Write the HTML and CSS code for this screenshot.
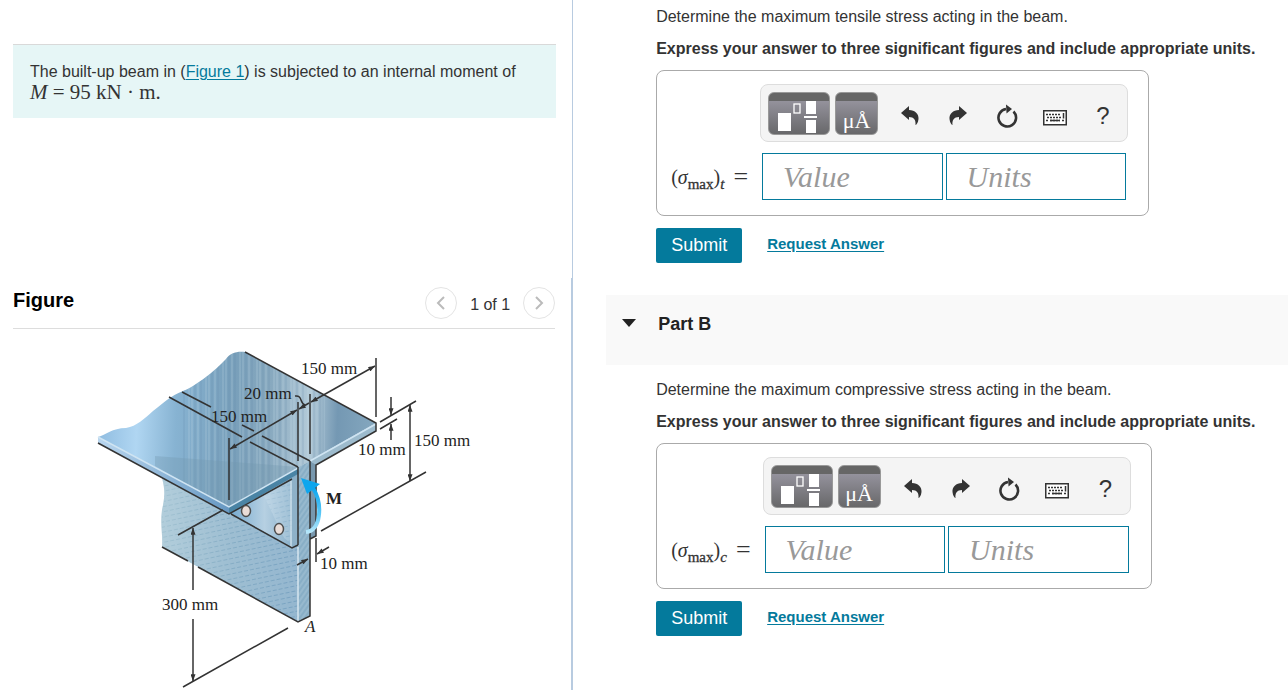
FILE: index.html
```
<!DOCTYPE html>
<html lang="en">

<head>
    <meta charset="UTF-8">
    <meta name="viewport" content="width=device-width, initial-scale=1.0">
    <title>Built-up Beam</title>
    <link rel="stylesheet" href="styles.css">
</head>

<body>
    <!-- Shared toolbar icons -->
    <svg class="icon-defs" aria-hidden="true">
        <symbol id="icon-template" viewBox="0 0 62 43">
            <path d="M10 21h13v18H10z M38 9h10v13H38z M38 28h10v13H38z M36 24h13v2H36z" fill="#fff" />
            <rect x="26" y="12" width="6" height="9" fill="none" stroke="#fff" stroke-width="1.3" />
        </symbol>
        <symbol id="icon-undo" viewBox="0 0 18 20">
            <path d="M0 7 8 0V4C14 4 18 8 17.500 13 17.200 17 15 19 14.500 19 15 14 13 11 8 11V14Z" fill="#333" />
        </symbol>
        <symbol id="icon-reset" viewBox="0 0 22 24">
            <path d="M17.500 7.500A8.800 8.800 0 1 1 10 5" fill="none" stroke="#333" stroke-width="2.600" />
            <path d="M10 0.500 16 5 10.500 9.500Z" fill="#333" />
        </symbol>
        <symbol id="icon-keyboard" viewBox="0 0 24 16">
            <rect x="0.750" y="0.750" width="22.500" height="14" fill="#fff" stroke="#333" stroke-width="1.500" />
            <path d="M3 4.500H18M4 7.500H19M3 10.500H5M7 10.500H17M19 10.500H21" fill="none" stroke="#333" stroke-width="1.500" stroke-dasharray="2 1" />
            <path d="M7 10.500H17M20.500 3V8.500" stroke="#333" stroke-width="1.500" />
        </symbol>
    </svg>

    <div class="left-panel">
        <section class="problem">
            <div class="problem-box">
                The built-up beam in (<a href="#figure">Figure 1</a>) is subjected to an internal moment of
                <div class="math"><i>M</i> = 95 kN · m.</div>
            </div>
        </section>

        <section class="figure" id="figure">
            <div class="figure-header">
                <h2>Figure</h2>
                <div class="pager">
                    <button type="button" aria-label="Previous figure">
                        <svg width="10" height="14" viewBox="0 0 10 14"><path d="M8 1 2 7 8 13" /></svg>
                    </button>
                    <span>1 of 1</span>
                    <button type="button" aria-label="Next figure">
                        <svg width="10" height="14" viewBox="0 0 10 14"><path d="M2 1 8 7 2 13" /></svg>
                    </button>
                </div>
            </div>

            <svg class="beam" width="400" height="344" viewBox="90 346 400 344" role="img" aria-label="Built-up beam with dimensions">
                <defs>
                    <linearGradient id="flange" gradientUnits="userSpaceOnUse" x1="98" y1="420" x2="376" y2="430">
                        <stop offset="0" stop-color="#8fbce0" />
                        <stop offset="0.140" stop-color="#b0d6f2" />
                        <stop offset="0.280" stop-color="#87b3d2" />
                        <stop offset="0.480" stop-color="#789fba" />
                        <stop offset="0.620" stop-color="#88a9bf" />
                        <stop offset="0.760" stop-color="#b3cad8" />
                        <stop offset="0.860" stop-color="#7498b3" />
                        <stop offset="1" stop-color="#85a8bf" />
                    </linearGradient>
                    <linearGradient id="web" x1="0" y1="0" x2="1" y2="0">
                        <stop offset="0" stop-color="#a3c3d2" />
                        <stop offset="0.500" stop-color="#86adc5" />
                        <stop offset="1" stop-color="#78a2c1" />
                    </linearGradient>
                    <linearGradient id="angle" x1="0" y1="0" x2="1" y2="0">
                        <stop offset="0" stop-color="#77abd0" />
                        <stop offset="0.500" stop-color="#b6d0e2" />
                        <stop offset="1" stop-color="#7fa9c5" />
                    </linearGradient>
                    <linearGradient id="edge" x1="0" y1="0" x2="1" y2="0">
                        <stop offset="0" stop-color="#b9d6ef" />
                        <stop offset="1" stop-color="#6798c2" />
                    </linearGradient>
                    <linearGradient id="moment" x1="0" y1="0" x2="0" y2="1">
                        <stop offset="0" stop-color="#0da6ee" />
                        <stop offset="0.600" stop-color="#5cc8f6" />
                        <stop offset="1" stop-color="#b5e6fa" />
                    </linearGradient>
                    <pattern id="weave" width="6" height="5" patternUnits="userSpaceOnUse" patternTransform="rotate(-12)">
                        <path d="M0 1H4M0 3H4M5 0V5" stroke="#d4e6ee" stroke-width="1" opacity="0.600" />
                    </pattern>
                    <pattern id="streaks" width="17" height="10" patternUnits="userSpaceOnUse">
                        <path d="M2 0V10M5 0V10M11 0V10" stroke="#c6dce9" stroke-width="0.700" opacity="0.500" />
                        <path d="M8 0V10M14 0V10" stroke="#5a83a0" stroke-width="0.700" opacity="0.450" />
                    </pattern>
                    <pattern id="hatch" width="4" height="4" patternUnits="userSpaceOnUse" patternTransform="rotate(-55)">
                        <path d="M0 2H4" stroke="#c8dde8" stroke-width="0.700" opacity="0.700" />
                    </pattern>
                    <marker id="arrow" viewBox="0 0 8 6" refX="8" refY="3" markerWidth="8" markerHeight="5" markerUnits="userSpaceOnUse" orient="auto-start-reverse">
                        <path d="M0 0 8 3 0 6Z" fill="#333" />
                    </marker>
                </defs>

                <!-- Vertical plate -->
                <path d="M162 478C166 492 164 500 162 510 160 525 163 535 162 547L298 622V470Z" fill="url(#web)" />
                <path d="M162 478C166 492 164 500 162 510 160 525 163 535 162 547L298 622V470Z" fill="url(#weave)" />
                <path d="M298 467 310 461V616L298 622Z" fill="#88aec6" />
                <path d="M298 467 310 461V616L298 622Z" fill="url(#hatch)" />
                <path d="M310 461 316 464V536L310 539Z" fill="#7898ae" />

                <!-- Angle under the flange -->
                <path d="M231 513 298 474V545L292 548Z" fill="url(#angle)" />
                <path d="M264 496 292 480V544L284 538Z" fill="url(#weave)" />
                <path d="M292 480 298 474V545L292 548Z" fill="#8eb1c8" />
                <path d="M291 481V547" stroke="#c7dbe7" stroke-width="1.500" />
                <path d="M298 547V621" stroke="#d6e6ef" stroke-width="1.500" />

                <!-- Top plate -->
                <path d="M98 437C106 435 112 428 126 428 137 426 144 419 153 411 165 402 170 396 183 391 196 386 216 370 226 359 230 353 237 351 245 352L376 423 229 507Z" fill="url(#flange)" />
                <path d="M183 391C196 386 216 370 226 359 230 353 237 351 245 352L325 395V452L229 507 183 482Z" fill="url(#streaks)" />
                <path d="M155 456 298 467 229 507 155 466Z" fill="#7297b0" opacity="0.350" />
                <path d="M98 437 229 507V514L98 443Z" fill="url(#edge)" />
                <path d="M229 507 298 467V474L229 514Z" fill="#4a84a5" />
                <path d="M298 467 376 423V431L316 465 310 461 298 467Z" fill="#9dbbcd" />
                <path d="M98 437 229 507 298 468M310 461 376 424" fill="none" stroke="#cfe4f2" stroke-width="1.500" />

                <g fill="none" stroke="#333" stroke-width="1.500">
                    <path d="M98 443 229 514 292 479M245 352 376 423V431L316 465V536L310 539M231 514 292 548 298 545" />
                    <path d="M162 547 188 561M198 567 298 622 310 616V461M298 467V545" />
                    <path d="M169 397 242 437M250 442 298 467M182 392 211 407M242 425 254 431M262 436 310 461" />
                </g>

                <g fill="#e9ddd8" stroke="#4d4d4d" stroke-width="1.500">
                    <ellipse cx="246" cy="511" rx="4.500" ry="5.500" />
                    <ellipse cx="279" cy="529" rx="4.500" ry="5.500" />
                </g>

                <!-- Moment arrow -->
                <path d="M306 532C321 531 323 504 313 488" fill="none" stroke="url(#moment)" stroke-width="4" />
                <path d="M301 478 320 484 307 494Z" fill="#0da6ee" />

                <!-- Dimension lines -->
                <g fill="none" stroke="#333" stroke-width="1.500">
                    <path d="M229 438V500M298 402V461M310 394V454M376 358V417" />
                    <path d="M230 449 297 410" marker-start="url(#arrow)" marker-end="url(#arrow)" />
                    <path d="M299 409 309 403" marker-start="url(#arrow)" />
                    <path d="M311 402 375 366" marker-start="url(#arrow)" marker-end="url(#arrow)" />
                    <path d="M295 396C303 395 299 403 305 405M380 422 416 401M380 429 397 419" />
                    <path d="M391 397V415" marker-end="url(#arrow)" />
                    <path d="M391 440V424" marker-end="url(#arrow)" />
                    <path d="M410 405V481" marker-start="url(#arrow)" marker-end="url(#arrow)" />
                    <path d="M321 531 426 472M316 538V562M178 535 223 510M183 687 288 628" />
                    <path d="M329 547 317 554" marker-end="url(#arrow)" />
                    <path d="M297 565 308 559" marker-end="url(#arrow)" />
                    <path d="M193 590V528" marker-end="url(#arrow)" />
                    <path d="M193 619V681" marker-end="url(#arrow)" />
                </g>

                <g class="dimensions">
                    <text x="301" y="374">150 mm</text>
                    <text x="244" y="399">20 mm</text>
                    <text x="211" y="422">150 mm</text>
                    <text x="358" y="455">10 mm</text>
                    <text x="414" y="446">150 mm</text>
                    <text x="326" y="504" font-weight="bold">M</text>
                    <text x="320" y="569">10 mm</text>
                    <text x="162" y="610">300 mm</text>
                    <text x="305" y="632" font-style="italic">A</text>
                </g>
            </svg>
        </section>
    </div>

    <main class="content">
        <form class="part">
            <p>Determine the maximum tensile stress acting in the beam.</p>
            <p><strong>Express your answer to three significant figures and include appropriate units.</strong></p>
            <div class="answer-box">
                <div class="toolbar">
                    <button type="button" class="math-button" aria-label="Templates"><svg width="62" height="43"><use href="#icon-template" /></svg></button>
                    <button type="button" class="math-button symbols">μÅ</button>
                    <div class="tools">
                        <button type="button" aria-label="Undo"><svg width="18" height="20"><use href="#icon-undo" /></svg></button>
                        <button type="button" aria-label="Redo"><svg class="flip" width="18" height="20"><use href="#icon-undo" /></svg></button>
                        <button type="button" aria-label="Reset"><svg width="22" height="24"><use href="#icon-reset" /></svg></button>
                        <button type="button" aria-label="Keyboard shortcuts"><svg class="keyboard" width="24" height="16"><use href="#icon-keyboard" /></svg></button>
                        <button type="button" aria-label="Help">?</button>
                    </div>
                </div>
                <label for="valueA" class="math">(<i>σ</i><sub>max</sub>)<sub><i>t</i></sub> <span class="equals">=</span></label>
                <div class="fields">
                    <input type="text" id="valueA" placeholder="Value">
                    <input type="text" id="unitsA" placeholder="Units" aria-label="Units">
                </div>
            </div>
            <div class="actions">
                <button type="submit" class="submit">Submit</button>
                <a href="#">Request Answer</a>
            </div>
        </form>

        <div class="part-header">
            <svg width="14" height="8" viewBox="0 0 14 8"><path d="M0 0H14L7 8Z" fill="#222" /></svg>
            <h2>Part B</h2>
        </div>

        <form class="part part-b">
            <p>Determine the maximum compressive stress acting in the beam.</p>
            <p><strong>Express your answer to three significant figures and include appropriate units.</strong></p>
            <div class="answer-box">
                <div class="toolbar">
                    <button type="button" class="math-button" aria-label="Templates"><svg width="62" height="43"><use href="#icon-template" /></svg></button>
                    <button type="button" class="math-button symbols">μÅ</button>
                    <div class="tools">
                        <button type="button" aria-label="Undo"><svg width="18" height="20"><use href="#icon-undo" /></svg></button>
                        <button type="button" aria-label="Redo"><svg class="flip" width="18" height="20"><use href="#icon-undo" /></svg></button>
                        <button type="button" aria-label="Reset"><svg width="22" height="24"><use href="#icon-reset" /></svg></button>
                        <button type="button" aria-label="Keyboard shortcuts"><svg class="keyboard" width="24" height="16"><use href="#icon-keyboard" /></svg></button>
                        <button type="button" aria-label="Help">?</button>
                    </div>
                </div>
                <label for="valueB" class="math">(<i>σ</i><sub>max</sub>)<sub><i>c</i></sub> <span class="equals">=</span></label>
                <div class="fields">
                    <input type="text" id="valueB" placeholder="Value">
                    <input type="text" id="unitsB" placeholder="Units" aria-label="Units">
                </div>
            </div>
            <div class="actions">
                <button type="submit" class="submit">Submit</button>
                <a href="#">Request Answer</a>
            </div>
        </form>
    </main>
</body>

</html>
```
FILE: styles.css
```
* {
    box-sizing: border-box;
}

body {
    display: flex;
    min-height: 100vh;
    margin: 0;
    font-family: "Liberation Sans", Arial, sans-serif;
    font-size: 16px;
    line-height: 20px;
    color: #333;
    background-color: #fff;
}

h2,
p {
    margin: 0;
}

a {
    color: #047a9c;
    text-underline-offset: 2px;
}

button {
    padding: 0;
    border: none;
    font-family: inherit;
    color: inherit;
    background: none;
    cursor: pointer;
}

button svg {
    display: block;
}

.icon-defs {
    position: absolute;
    width: 0;
    height: 0;
}

.math {
    font-family: "Liberation Serif", serif;
    font-size: 20px;
}

/* Left side */
.left-panel {
    display: flex;
    flex-direction: column;
    flex: 0 0 44.5%;
}

.problem {
    min-height: 278px;
    padding: 44px 16px 0 13px;
    border-right: 1px solid #b8cbe0;
}

.problem-box {
    padding: 17px 17px 16px;
    border-top: 1px solid #d9d9d9;
    background-color: #e6f6f6;
}

.problem-box .math {
    font-size: 21px;
}

.figure {
    flex: 1;
    padding: 0 16px 0 13px;
    border-right: 2px solid #b8cbe0;
}

.figure-header {
    display: flex;
    justify-content: space-between;
    height: 51px;
    padding-top: 9px;
    border-bottom: 1px solid #ddd;
}

.figure-header h2 {
    font-size: 20px;
    line-height: 26px;
    color: #000;
}

.pager {
    display: flex;
    gap: 13px;
}

.pager span {
    line-height: 36px;
}

.pager button {
    display: flex;
    align-items: center;
    justify-content: center;
    width: 32px;
    height: 32px;
    border: 1px solid #e4e4e4;
    border-radius: 50%;
}

.pager path {
    fill: none;
    stroke: #bbb;
    stroke-width: 2;
}

.beam {
    display: block;
    margin: 17px auto 0 77px;
}

.dimensions {
    font-family: "Liberation Serif", serif;
    font-size: 17px;
    fill: #222;
}

/* Right side */
.content {
    flex: 1;
    min-width: 0;
    padding-left: 33px;
}

.part {
    padding: 7px 0 32px 50px;
}

.part-b {
    padding-top: 15px;
}

.part p {
    margin-bottom: 12px;
}

.part p + p {
    margin-bottom: 11px;
}

.answer-box {
    display: inline-grid;
    grid-template-columns: auto 368px;
    gap: 11px 12px;
    align-items: center;
    padding: 13px 20px 15px 14px;
    border: 1px solid #aaa;
    border-radius: 8px;
    vertical-align: top;
}

.answer-box label {
    white-space: nowrap;
}

.answer-box sub {
    font-size: 15px;
    line-height: 0;
    -webkit-text-stroke: 0.3px;
}

.equals {
    padding-left: 4px;
    font-size: 26px;
    line-height: 0;
    vertical-align: -1px;
}

.toolbar {
    display: flex;
    grid-column: 2;
    gap: 5px;
    height: 58px;
    padding: 7px 0 7px 7px;
    border: 1px solid #ddd;
    border-radius: 8px;
    background-color: #f4f4f4;
}

.math-button {
    flex: none;
    width: 62px;
    height: 43px;
    border: 1px solid #999;
    border-radius: 6px;
    color: #fff;
    background: linear-gradient(#666 0 8px, #94929c 8px, #68686a);
    overflow: hidden;
}

.math-button svg {
    margin: -1px;
}

.symbols {
    width: 43px;
    padding-top: 14px;
    font-family: "Liberation Serif", serif;
    font-size: 22px;
}

.tools {
    display: flex;
    flex: 1;
    padding: 5px 0 0 3px;
}

.tools button {
    display: flex;
    flex: 1;
    align-items: center;
    justify-content: center;
    font-size: 24px;
}

.flip {
    transform: scaleX(-1);
}

.keyboard {
    margin-top: 4px;
}

.fields {
    display: flex;
    gap: 3px;
    padding: 0 2px;
}

.fields input {
    flex: 1;
    min-width: 0;
    height: 47px;
    padding: 0 20px;
    border: 1px solid #047a9c;
    border-radius: 0;
    font-family: "Liberation Serif", serif;
    font-size: 30px;
}

.fields input::placeholder {
    font-style: italic;
    color: #999;
}

.actions {
    display: flex;
    gap: 25px;
    margin-top: 12px;
}

.actions a {
    font-size: 15px;
    font-weight: bold;
    line-height: 32px;
}

.submit {
    width: 86px;
    height: 35px;
    border-radius: 2px;
    font-size: 18px;
    color: #fff;
    background-color: #047a9c;
}

.part-header {
    display: flex;
    align-items: flex-start;
    gap: 22px;
    height: 70px;
    padding: 19px 16px;
    background-color: #f9f9f9;
}

.part-header svg {
    margin-top: 5px;
}

.part-header h2 {
    font-size: 18px;
    line-height: 20px;
    color: #222;
}
```
